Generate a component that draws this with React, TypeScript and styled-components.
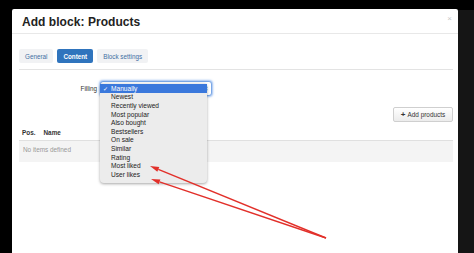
import React from "react";
import styled, { createGlobalStyle } from "styled-components";

const Global = createGlobalStyle`
  html, body { margin: 0; padding: 0; background: #000; }
  body { font-family: "Liberation Sans", Arial, sans-serif; }
  * { box-sizing: border-box; }
`;

const Page = styled.div`
  position: relative;
  width: 474px;
  height: 253px;
  overflow: hidden;
  display: flex;
  background: #000;
`;

const LeftGutter = styled.div`
  width: 12px;
  flex: none;
`;

const RightGutter = styled.div`
  flex: 1;
  margin-top: 10px;
  background: #151515;
`;

const Modal = styled.div`
  width: 446px;
  margin-top: 9px;
  background: #fff;
  border-radius: 2px 2px 0 0;
  display: flex;
  flex-direction: column;
`;

const Header = styled.div`
  height: 25px;
  border-bottom: 1px solid #e8e8e8;
  display: flex;
  align-items: center;
  justify-content: space-between;
  padding: 2px 6px 0 10px;
`;

const Title = styled.h1`
  margin: 0;
  font-size: 12px;
  font-weight: 700;
  color: #222;
  letter-spacing: 0.05px;
`;

const Close = styled.span`
  font-size: 8px;
  color: #c8c8c8;
  align-self: flex-start;
  margin-top: 3px;
`;

const Body = styled.div`
  padding: 15px 5px 0 7px;
  display: flex;
  flex-direction: column;
`;

const Tabs = styled.div`
  display: flex;
  gap: 4px;
  padding-bottom: 6px;
  border-bottom: 1px solid #e3e3e3;
`;

const Tab = styled.div<{ $active?: boolean }>`
  height: 14px;
  padding: 0 6px;
  display: flex;
  align-items: center;
  font-size: 6.3px;
  border-radius: 2px;
  background: ${(p) => (p.$active ? "#2f74bd" : "#f1f2f4")};
  color: ${(p) => (p.$active ? "#fff" : "#3f6ea3")};
  font-weight: ${(p) => (p.$active ? 700 : 400)};
`;

const FormRow = styled.div`
  margin-top: 11px;
  display: grid;
  grid-template-columns: 78px 112px;
  column-gap: 3px;
  align-items: center;
`;

const Label = styled.div`
  font-size: 6.3px;
  color: #333;
  text-align: right;
`;

const SelectWrap = styled.div`
  position: relative;
  height: 15px;
  border: 1px solid #7aa7e6;
  border-radius: 3px;
  box-shadow: 0 0 2px 1px rgba(80, 140, 230, 0.55);
  background: #fff;
`;

const Arrows = styled.span`
  position: absolute;
  right: 2px;
  top: 2px;
  font-size: 7px;
  color: #555;
  line-height: 9px;
`;

const Menu = styled.ul`
  position: absolute;
  left: -1px;
  top: 1px;
  width: 107px;
  margin: 0;
  padding: 1px 0 4px;
  list-style: none;
  background: #ececec;
  border-radius: 4px;
  box-shadow: 0 1px 3px rgba(0, 0, 0, 0.35);
  z-index: 2;
`;

const Item = styled.li<{ $selected?: boolean }>`
  height: 8.6px;
  display: flex;
  align-items: center;
  padding-left: 11px;
  position: relative;
  font-size: 6.6px;
  color: ${(p) => (p.$selected ? "#fff" : "#222")};
  background: ${(p) => (p.$selected ? "#3a78dc" : "transparent")};
`;

const Check = styled.span`
  position: absolute;
  left: 3px;
  font-size: 6px;
`;

const ButtonRow = styled.div`
  margin-top: 11px;
  display: flex;
  justify-content: flex-end;
`;

const Button = styled.div`
  height: 15px;
  width: 60px;
  display: flex;
  align-items: center;
  justify-content: center;
  gap: 2px;
  font-size: 6.4px;
  color: #333;
  border: 1px solid #cfcfcf;
  border-radius: 2px;
  background: linear-gradient(#fff, #ececec);
`;

const Plus = styled.b`
  font-size: 8px;
  line-height: 8px;
`;

const Table = styled.div`
  margin-top: 2px;
  display: flex;
  flex-direction: column;
`;

const HeadRow = styled.div`
  height: 17px;
  display: flex;
  align-items: center;
  gap: 8px;
  padding: 0 3px;
  border-bottom: 1px solid #e0e0e0;
  font-size: 6.4px;
  font-weight: 700;
  color: #333;
`;

const EmptyRow = styled.div`
  height: 21px;
  padding: 5px 4px 0;
  background: #f4f4f4;
  font-size: 6.4px;
  color: #999;
`;

const Overlay = styled.svg`
  position: absolute;
  left: 0;
  top: 0;
  pointer-events: none;
  z-index: 5;
`;

const options = [
  "Manually",
  "Newest",
  "Recently viewed",
  "Most popular",
  "Also bought",
  "Bestsellers",
  "On sale",
  "Similar",
  "Rating",
  "Most liked",
  "User likes",
];

function Arrow({ x1, y1, x2, y2 }: { x1: number; y1: number; x2: number; y2: number }) {
  const a = Math.atan2(y2 - y1, x2 - x1);
  const len = 9;
  const w = 2.6;
  const bx = x2 - len * Math.cos(a);
  const by = y2 - len * Math.sin(a);
  const px = -Math.sin(a) * w;
  const py = Math.cos(a) * w;
  return (
    <g>
      <line x1={x1} y1={y1} x2={bx} y2={by} stroke="#e2302a" strokeWidth={1.4} />
      <polygon
        points={`${x2},${y2} ${bx + px},${by + py} ${bx - px},${by - py}`}
        fill="#e2302a"
      />
    </g>
  );
}

export default function App() {
  return (
    <>
      <Global />
      <Page>
        <LeftGutter />
        <Modal>
          <Header>
            <Title>Add block: Products</Title>
            <Close>×</Close>
          </Header>
          <Body>
            <Tabs>
              <Tab>General</Tab>
              <Tab $active>Content</Tab>
              <Tab>Block settings</Tab>
            </Tabs>
            <FormRow>
              <Label>Filling</Label>
              <SelectWrap>
                <Arrows>⬍</Arrows>
                <Menu>
                  {options.map((o, i) => (
                    <Item key={o} $selected={i === 0}>
                      {i === 0 && <Check>✓</Check>}
                      {o}
                    </Item>
                  ))}
                </Menu>
              </SelectWrap>
            </FormRow>
            <ButtonRow>
              <Button>
                <Plus>+</Plus> Add products
              </Button>
            </ButtonRow>
            <Table>
              <HeadRow>
                <span>Pos.</span>
                <span>Name</span>
              </HeadRow>
              <EmptyRow>No items defined</EmptyRow>
            </Table>
          </Body>
        </Modal>
        <RightGutter />
        <Overlay width={474} height={253}>
          <Arrow x1={326} y1={238} x2={150} y2={166} />
          <Arrow x1={326} y1={238} x2={151} y2={179} />
        </Overlay>
      </Page>
    </>
  );
}
